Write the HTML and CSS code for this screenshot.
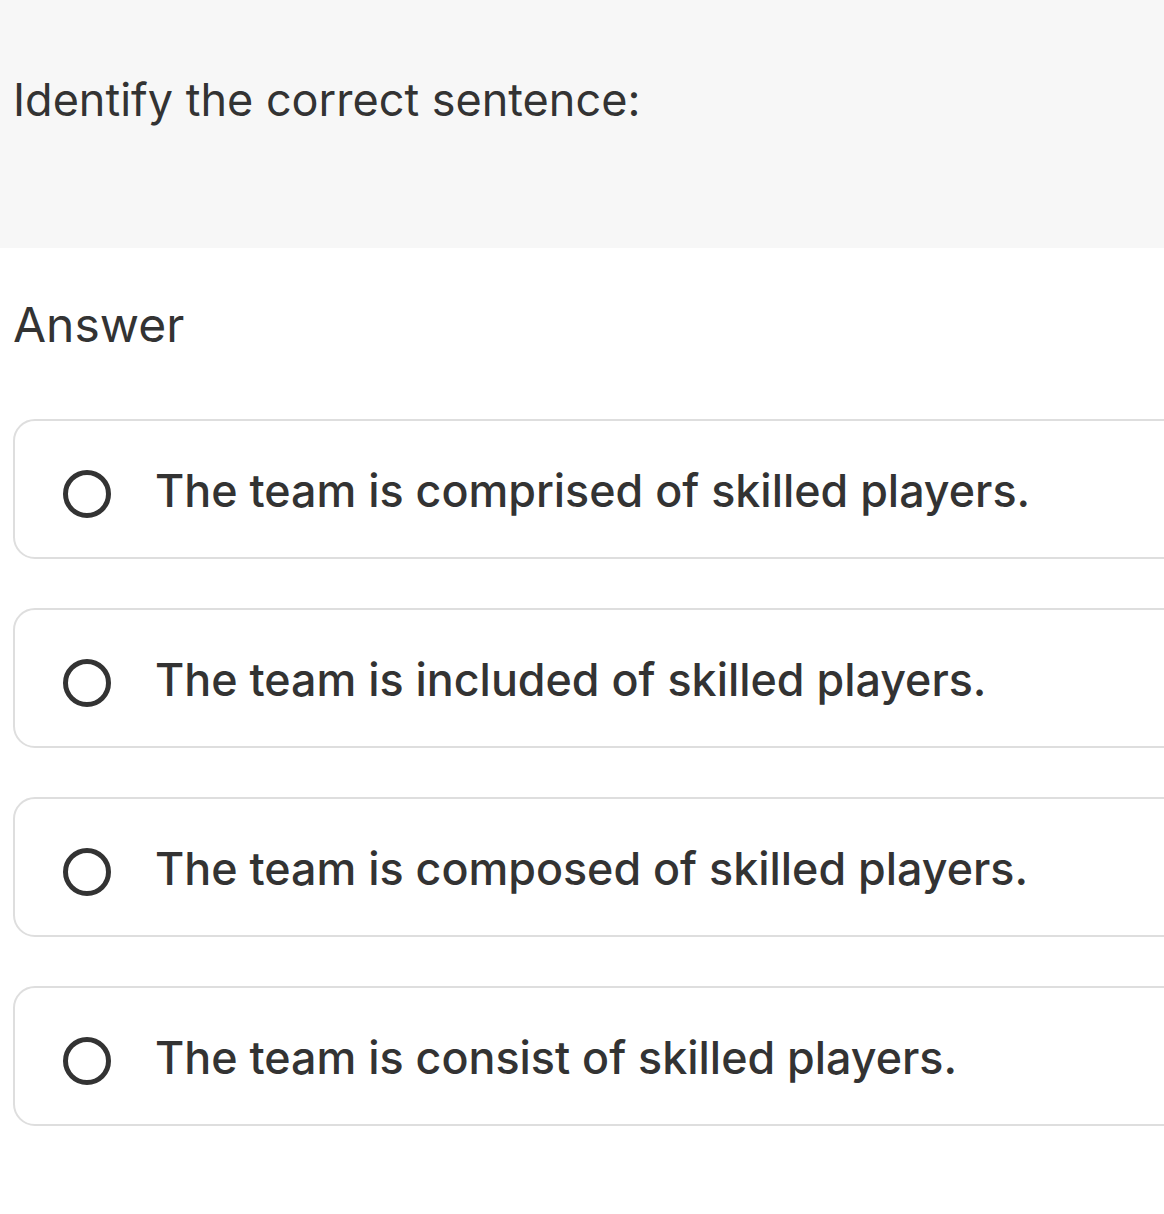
FILE: index.html
```html
<!DOCTYPE html>
<html>
<head>
<meta charset="utf-8">
<link rel="stylesheet" href="styles.css">
</head>
<body>
<div class="question">
  <p class="question-text">Identify the correct sentence:</p>
</div>
<div class="answer">
  <h2 class="answer-title">Answer</h2>
  <ul class="options">
    <li class="option"><span class="radio"></span><span class="label">The team is comprised of skilled players.</span></li>
    <li class="option"><span class="radio"></span><span class="label">The team is included of skilled players.</span></li>
    <li class="option"><span class="radio"></span><span class="label">The team is composed of skilled players.</span></li>
    <li class="option"><span class="radio"></span><span class="label">The team is consist of skilled players.</span></li>
  </ul>
</div>
</body>
</html>
```
FILE: styles.css
```css
html, body {
  margin: 0;
  padding: 0;
  background: #ffffff;
  overflow: hidden;
}
body {
  font-family: Inter, "Noto Sans", sans-serif;
  color: #333333;
  width: 1164px;
  height: 1214px;
}
.question {
  background: #f7f7f7;
  height: 248px;
  display: flex;
  align-items: flex-start;
  padding: 0 0 0 13px;
  box-sizing: border-box;
}
.question-text {
  margin: 72px 0 0;
  font-size: 45px;
  font-weight: 400;
  line-height: 56px;
}
.answer {
  padding: 0 0 0 13px;
}
.answer-title {
  margin: 48px 0 0;
  font-size: 48px;
  font-weight: 400;
  line-height: 58px;
}
.options {
  list-style: none;
  margin: 65px 0 0;
  padding: 0;
  display: flex;
  flex-direction: column;
  gap: 49px;
}
.option {
  width: 1200px;
  height: 140px;
  box-sizing: border-box;
  border: 2px solid #dedede;
  border-radius: 22px;
  display: flex;
  align-items: center;
  padding-left: 48px;
}
.radio {
  width: 48px;
  height: 48px;
  box-sizing: border-box;
  border: 5px solid #333333;
  border-radius: 50%;
  margin-top: 10px;
  flex: none;
}
.label {
  margin-left: 44px;
  padding-top: 3px;
  font-size: 44.8px;
  font-weight: 500;
  line-height: 54px;
}
```
